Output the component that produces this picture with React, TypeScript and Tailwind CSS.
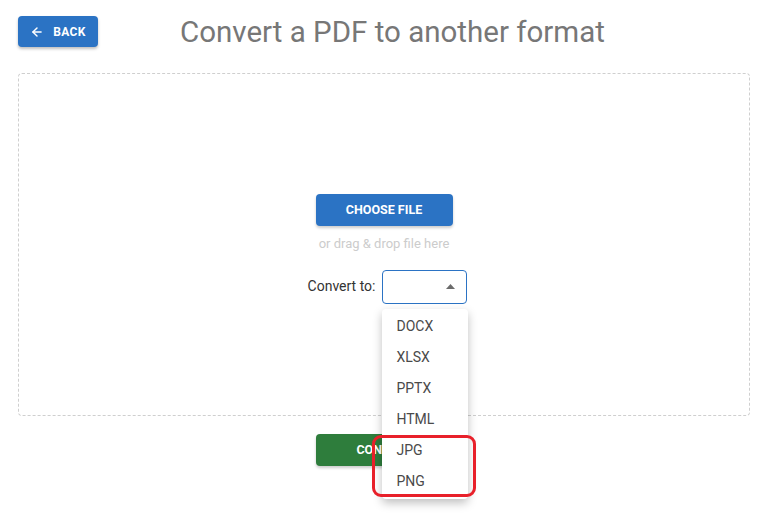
import { ArrowLeft } from "lucide-react"

const formats = ["DOCX", "XLSX", "PPTX", "HTML", "JPG", "PNG"]

export default function App() {
  return (
    <div className="relative w-[768px] h-[528px] overflow-hidden bg-white px-[18px] pt-4 font-['Roboto',sans-serif]">
      {/* Header */}
      <div className="flex items-start">
        <button className="flex h-[31px] w-[80px] items-center justify-center gap-[9px] rounded-[4px] bg-[#2b73c4] text-[12px] font-bold tracking-[0.3px] text-white shadow-[0_2px_3px_rgba(0,0,0,0.25)]">
          <ArrowLeft size={14} strokeWidth={2.5} />
          BACK
        </button>
        <h1 className="ml-[82px] -mt-[2px] text-[29.5px] leading-[36px] text-[#777777]">
          Convert a PDF to another format
        </h1>
      </div>

      {/* Drop zone */}
      <div className="mt-[23px] flex h-[343px] flex-col items-center rounded-[4px] border border-dashed border-[#cfcfcf] pt-[120px]">
        <button className="h-[32px] w-[137px] rounded-[4px] bg-[#2b73c4] text-[12.5px] font-bold text-white shadow-[0_2px_3px_rgba(0,0,0,0.2)]">
          CHOOSE FILE
        </button>
        <p className="mt-[8px] text-[13px] text-[#cccccc]">or drag &amp; drop file here</p>
        <div className="mt-[16px] ml-[7px] flex items-center gap-[7px]">
          <span className="text-[14px] text-[#333333]">Convert to:</span>
          <div className="relative">
            <div className="flex h-[34px] w-[85px] items-center justify-end rounded-[4px] border border-[#2b73c4] pr-[11px]">
              <svg width="9" height="5" viewBox="0 0 9 5">
                <path d="M0 5 L4.5 0 L9 5 Z" fill="#6b6b6b" />
              </svg>
            </div>
            {/* Open menu */}
            <div className="absolute left-0 top-[39px] z-10 w-[86px] rounded-[4px] bg-white py-[2px] shadow-[0_4px_10px_rgba(0,0,0,0.25)]">
              {formats.map((f) => (
                <div key={f} className="flex h-[31px] items-center pl-[14px] text-[14px] text-[#4a4a4a]">
                  {f}
                </div>
              ))}
            </div>
          </div>
        </div>
      </div>

      {/* Convert button */}
      <div className="mt-[18px] flex justify-center">
        <button className="ml-[1px] h-[32px] w-[137px] rounded-[4px] bg-[#2e7d3c] text-[12.5px] font-bold text-white shadow-[0_2px_3px_rgba(0,0,0,0.2)]">
          CONVERT
        </button>
      </div>

      {/* Highlight annotation */}
      <div className="absolute left-[372px] top-[435px] z-20 h-[62px] w-[104px] rounded-[9px] border-[3px] border-[#e8202a]" />
    </div>
  )
}
